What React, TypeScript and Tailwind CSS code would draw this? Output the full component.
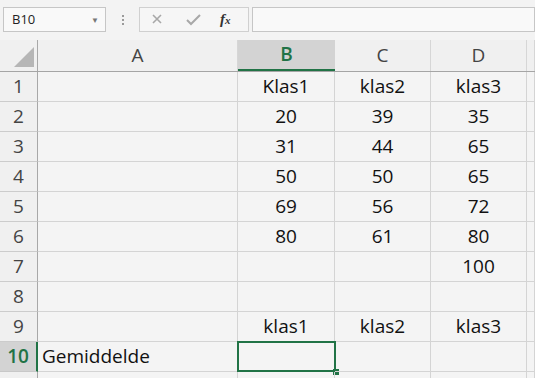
import React from 'react';

const cols = [
  { key: 'A', w: 'w-[200px]' },
  { key: 'B', w: 'w-[97px]' },
  { key: 'C', w: 'w-[96px]' },
  { key: 'D', w: 'w-[96px]' },
  { key: '', w: 'flex-1' },
];

const rows: string[][] = [
  ['', 'Klas1', 'klas2', 'klas3', ''],
  ['', '20', '39', '35', ''],
  ['', '31', '44', '65', ''],
  ['', '50', '50', '65', ''],
  ['', '69', '56', '72', ''],
  ['', '80', '61', '80', ''],
  ['', '', '', '100', ''],
  ['', '', '', '', ''],
  ['', 'klas1', 'klas2', 'klas3', ''],
  ['Gemiddelde', '', '', '', ''],
  ['', '', '', '', ''],
];

const App = () => {
  return (
    <div
      className="w-[535px] h-[378px] overflow-hidden bg-[#f4f4f4] text-[#111]"
      style={{ fontFamily: '"Open Sans", "Liberation Sans", sans-serif' }}
    >
      {/* Formula bar */}
      <div className="h-[40px] flex items-start pt-[7px] pl-[3px] bg-[#f3f3f3]">
        <div className="w-[103px] h-[25px] border border-[#c6c6c6] bg-[#f9f9f9] flex items-center pl-[8px] pr-[6px] text-[13px] text-[#222]">
          <span className="flex-1">B10</span>
          <span className="text-[8px] text-[#777]">▼</span>
        </div>
        <div className="w-[33px] h-[25px] flex flex-col items-center justify-center gap-[2px]">
          <span className="w-[2px] h-[2px] bg-[#9a9a9a]" />
          <span className="w-[2px] h-[2px] bg-[#9a9a9a]" />
          <span className="w-[2px] h-[2px] bg-[#9a9a9a]" />
        </div>
        <div className="w-[110px] h-[25px] border border-[#d0d0d0] bg-[#f6f6f6] flex items-center">
          <svg width="36" height="23" viewBox="0 0 36 23">
            <path d="M13 7 L21 15 M21 7 L13 15" stroke="#a8a8a8" strokeWidth="1.6" />
          </svg>
          <svg width="36" height="23" viewBox="0 0 36 23">
            <path d="M11 12 L15 16 L24 7" stroke="#a8a8a8" strokeWidth="2" fill="none" />
          </svg>
          <span
            className="ml-[8px] text-[15px] italic font-bold text-[#333]"
            style={{ fontFamily: '"Liberation Serif", serif' }}
          >
            f<span className="text-[11px]">x</span>
          </span>
        </div>
        <div className="ml-[3px] flex-1 h-[25px] border border-[#c6c6c6] bg-[#f9f9f9]" />
      </div>

      {/* Column headers */}
      <div className="h-[32px] flex border-b border-[#a5a5a5] bg-[#f0f0f0] text-[19px] text-[#444]">
        <div className="w-[38px] border-r border-[#a8a8a8] relative">
          <svg width="22" height="22" viewBox="0 0 22 22" className="absolute right-[2px] bottom-[3px]">
            <path d="M21 1 L21 21 L1 21 Z" fill="#b6b6b6" />
          </svg>
        </div>
        {cols.map((c, j) =>
          c.key === 'B' ? (
            <div
              key={j}
              className={`${c.w} flex items-center justify-center bg-[#d3d3d3] border-b-2 border-[#217346] text-[#217346] font-semibold`}
            >
              {c.key}
            </div>
          ) : (
            <div key={j} className={`${c.w} flex items-center justify-center border-r border-[#d6d6d6]`}>
              {c.key}
            </div>
          )
        )}
      </div>

      {/* Rows */}
      {rows.map((r, i) => {
        const n = i + 1;
        const active = n === 10;
        return (
          <div key={n} className="h-[30px] flex text-[19px]">
            <div
              className={
                active
                  ? 'w-[38px] flex items-center justify-center bg-[#d3d3d3] border-r-2 border-b border-r-[#217346] border-b-[#c8c8c8] text-[#217346] font-semibold'
                  : 'w-[38px] flex items-center justify-center bg-[#f0f0f0] border-r border-b border-r-[#a8a8a8] border-b-[#cccccc] text-[#444]'
              }
            >
              {n <= 10 ? n : ''}
            </div>
            {cols.map((c, j) => {
              const selected = active && c.key === 'B';
              return (
                <div
                  key={j}
                  className={`${c.w} relative flex items-center border-r border-b border-[#d4d4d4] ${
                    c.key === 'A' ? 'justify-start pl-[4px]' : 'justify-center'
                  }`}
                >
                  {r[j]}
                  {selected && (
                    <>
                      <div className="absolute left-[-1px] top-[-1px] right-[-2px] bottom-[-1px] border-2 border-[#217346]" />
                      <div className="absolute right-[-5px] bottom-[-4px] w-[6px] h-[6px] bg-[#217346]" />
                    </>
                  )}
                </div>
              );
            })}
          </div>
        );
      })}
    </div>
  );
};

export default App;
